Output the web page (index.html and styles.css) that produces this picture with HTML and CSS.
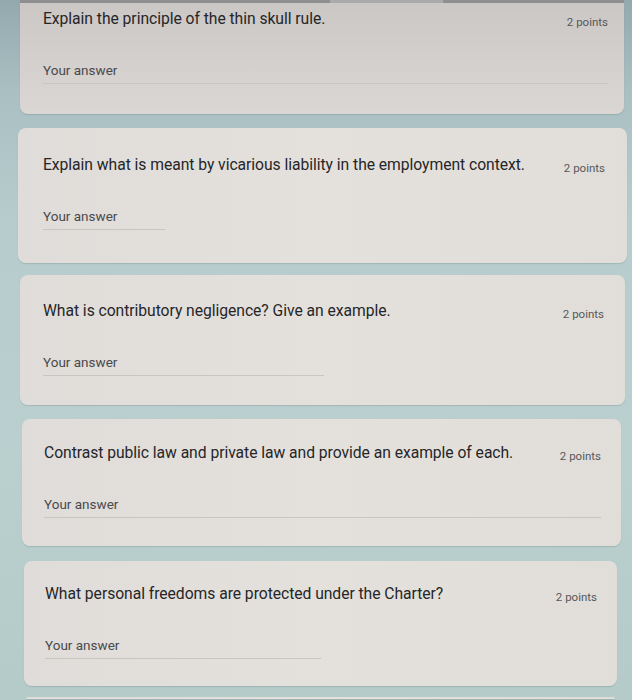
FILE: index.html
```html
<!DOCTYPE html>
<html lang="en">
<head>
<meta charset="utf-8">
<title>Questions</title>
<link rel="stylesheet" href="styles.css">
</head>
<body>
<div class="top-edge"><span class="top-light"></span></div>
<main class="form">
  <section class="card q1">
    <div class="head">
      <h2 class="title">Explain the principle of the thin skull rule.</h2>
      <span class="points">2 points</span>
    </div>
    <div class="answer">
      <div class="label">Your answer</div>
      <div class="line line-full"></div>
    </div>
  </section>
  <section class="card q2">
    <div class="head">
      <h2 class="title">Explain what is meant by vicarious liability in the employment context.</h2>
      <span class="points">2 points</span>
    </div>
    <div class="answer">
      <div class="label">Your answer</div>
      <div class="line line-short"></div>
    </div>
  </section>
  <section class="card q3">
    <div class="head">
      <h2 class="title">What is contributory negligence? Give an example.</h2>
      <span class="points">2 points</span>
    </div>
    <div class="answer">
      <div class="label">Your answer</div>
      <div class="line line-half"></div>
    </div>
  </section>
  <section class="card q4">
    <div class="head">
      <h2 class="title">Contrast public law and private law and provide an example of each.</h2>
      <span class="points">2 points</span>
    </div>
    <div class="answer">
      <div class="label">Your answer</div>
      <div class="line line-full"></div>
    </div>
  </section>
  <section class="card q5">
    <div class="head">
      <h2 class="title">What personal freedoms are protected under the Charter?</h2>
      <span class="points">2 points</span>
    </div>
    <div class="answer">
      <div class="label">Your answer</div>
      <div class="line line-half"></div>
    </div>
  </section>
  <section class="card q6"></section>
</main>
</body>
</html>
```
FILE: styles.css
```css
html, body {
  margin: 0;
  padding: 0;
}
body {
  width: 632px;
  height: 700px;
  overflow: hidden;
  font-family: Roboto, "Liberation Sans", sans-serif;
  background: linear-gradient(180deg, #93a9ae 0px, #a9bfc2 90px, #b6cccd 220px, #bad0cf 450px, #b4cbca 700px);
}
.top-edge {
  height: 3px;
  margin: 0 8px 0 20px;
  background: #8d8f90;
  display: flex;
}
.top-light {
  width: 113px;
  margin-left: 310px;
  background: #a9abab;
}
.form {
  display: flex;
  flex-direction: column;
}
.card {
  background: linear-gradient(90deg, #dfdcd9 0%, #e4e1dd 50%, #e1ded9 100%);
  border-radius: 8px;
  padding: 23px 20px 30px 23px;
  box-shadow: 0 1px 1px rgba(90, 110, 110, 0.25);
}
.q1 {
  margin: 0 8px 0 20px;
  padding-top: 5px;
  height: 76px;
  border-radius: 0 0 8px 8px;
  background: linear-gradient(180deg, #cbc7c5 0%, #d5d1ce 60%, #dad6d3 100%);
  padding-right: 16px;
}
.q2 {
  margin: 14px 5px 0 18px;
  padding-top: 26px;
  padding-left: 25px;
  padding-right: 22px;
  height: 79px;
}
.q3 {
  margin: 12px 7px 0 20px;
  padding-top: 25px;
  height: 75px;
  padding-right: 21px;
}
.q4 {
  margin: 14px 11px 0 22px;
  padding-top: 23px;
  padding-left: 22px;
  height: 74px;
}
.q5 {
  margin: 15px 15px 0 24px;
  padding-top: 22px;
  padding-left: 21px;
  height: 73px;
}
.q6 {
  margin: 11px 17px 0 26px;
  height: 2px;
  padding: 0;
  border-radius: 8px 8px 0 0;
}
.head {
  display: flex;
  justify-content: space-between;
  align-items: baseline;
}
.title {
  margin: 0;
  font-family: Roboto, "Liberation Sans", sans-serif;
  font-weight: 400;
  font-size: 15.7px;
  line-height: 22px;
  color: #262628;
  letter-spacing: -0.05px;
}
.points {
  font-size: 11.5px;
  color: #58585a;
  line-height: 22px;
  position: relative;
  top: 2px;
}
.answer {
  margin-top: 30px;
}
.label {
  font-size: 13.5px;
  line-height: 18px;
  color: #4a4a4c;
}
.line {
  margin-top: 4px;
  height: 0;
  border-bottom: 1px solid #c9c5c1;
}
.line-full {
  width: 100%;
}
.line-half {
  width: 50%;
}
.line-short {
  width: 122px;
}
```
